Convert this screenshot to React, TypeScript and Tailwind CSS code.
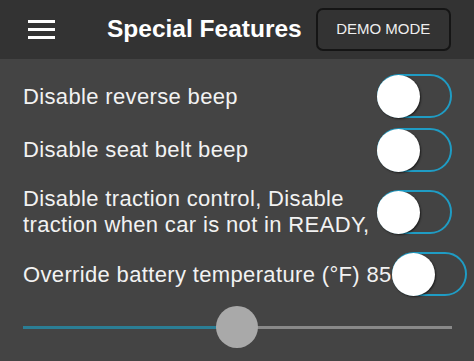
import React from "react";

function Toggle() {
  return (
    <div className="relative w-[75px] h-[44px] shrink-0 rounded-full border-2 border-[#1f9cc4] bg-[#434343]">
      <div className="absolute left-[-2px] top-[-1px] w-[43px] h-[43px] rounded-full bg-white shadow-[1px_1px_2px_rgba(0,0,0,0.6)]" />
    </div>
  );
}

export default function App() {
  return (
    <div
      className="w-[474px] h-[361px] bg-[#444444] text-white overflow-hidden"
      style={{ fontFamily: '"Liberation Sans", Arial, sans-serif' }}
    >
      <div className="h-[59px] bg-[#333333] flex items-center">
        <div className="ml-[28px] w-[27px] flex flex-col gap-[5.5px]">
          <div className="h-[2.5px] bg-white" />
          <div className="h-[2.5px] bg-white" />
          <div className="h-[2.5px] bg-white" />
        </div>
        <div className="ml-[52px] text-[24.5px] font-bold leading-none">Special Features</div>
        <div className="ml-[14px] w-[135px] h-[43px] rounded-[7px] border-2 border-[#151515] flex items-center justify-center text-[15px] text-[#eeeeee]">
          DEMO MODE
        </div>
      </div>
      <div className="flex flex-col pl-[23px] pr-[22px] text-[22px] tracking-[0.35px] text-[#f2f2f2]">
        <div className="mt-[15px] h-[44px] flex items-center justify-between">
          <span>Disable reverse beep</span>
          <Toggle />
        </div>
        <div className="mt-[9px] h-[45px] flex items-center justify-between">
          <span>Disable seat belt beep</span>
          <Toggle />
        </div>
        <div className="mt-[14px] h-[52px] flex items-center justify-between">
          <span className="leading-[26px] whitespace-nowrap">
            Disable traction control, Disable
            <br />
            traction when car is not in READY,
          </span>
          <Toggle />
        </div>
        <div className="mt-[14px] h-[44px] flex items-center -mr-[22px]">
          <span className="whitespace-nowrap">Override battery temperature (°F) 85</span>
          <Toggle />
        </div>
        <div className="mt-[10px] h-[42px] relative flex items-center">
          <div className="h-[3px] w-[193px] bg-[#2b7e95]" />
          <div className="h-[3px] flex-1 bg-[#898989]" />
          <div className="absolute left-[193px] top-0 w-[42px] h-[42px] rounded-full bg-[#a9a9a9]" />
        </div>
      </div>
    </div>
  );
}
